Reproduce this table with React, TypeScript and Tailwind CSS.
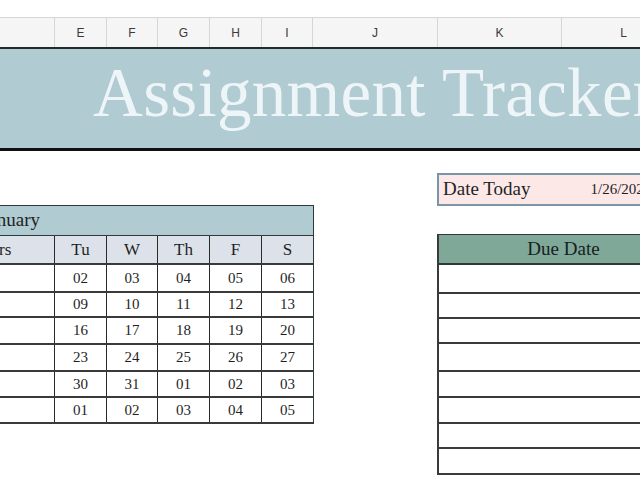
const serif = "font-['Liberation_Serif',serif]";

const letters = [
  { l: "", w: "w-[55px]" },
  { l: "E", w: "w-[52px]" },
  { l: "F", w: "w-[51px]" },
  { l: "G", w: "w-[52px]" },
  { l: "H", w: "w-[52px]" },
  { l: "I", w: "w-[51px]" },
  { l: "J", w: "w-[125px]" },
  { l: "K", w: "w-[124px]" },
  { l: "L", w: "w-[124px]" },
];

const dayCols = ["w-[52px]", "w-[51px]", "w-[52px]", "w-[52px]", "w-[51px]"];
const dayNames = ["Tu", "W", "Th", "F", "S"];

const weeks = [
  { h: "h-[28px]", d: ["02", "03", "04", "05", "06"] },
  { h: "h-[25px]", d: ["09", "10", "11", "12", "13"] },
  { h: "h-[27px]", d: ["16", "17", "18", "19", "20"] },
  { h: "h-[27px]", d: ["23", "24", "25", "26", "27"] },
  { h: "h-[26px]", d: ["30", "31", "01", "02", "03"] },
  { h: "h-[26px]", d: ["01", "02", "03", "04", "05"] },
];

const dueRows = ["h-[29px]", "h-[25px]", "h-[25px]", "h-[28px]", "h-[26px]", "h-[26px]", "h-[25px]", "h-[26px]"];

export default function App() {
  return (
    <div className="h-[479px] w-[640px] overflow-hidden bg-white">
      <div className="h-[17px]" />

      {/* column letters */}
      <div className="flex h-[30px] border-t border-[#d6d6d6] bg-[#f5f5f5] font-['Liberation_Sans',sans-serif] text-[12px] text-[#3a3a3a]">
        {letters.map((c, i) => (
          <div key={i} className={`${c.w} flex shrink-0 items-center justify-center border-r border-[#d6d6d6]`}>
            {c.l}
          </div>
        ))}
      </div>

      {/* banner */}
      <div className={`h-[104px] overflow-hidden border-t-2 border-b-[3px] border-t-[#1f2b2c] border-b-[#111] bg-[#b0cbd1] pl-[93px] pt-[10px] ${serif}`}>
        <div className="whitespace-nowrap text-[69px] leading-none tracking-[0.3px] text-[#eef5f8]">Assignment Tracker</div>
      </div>

      <div className={`flex items-start ${serif} text-[#1f1f1f]`}>
        {/* calendar */}
        <div className="mt-[54px] w-[314px] shrink-0 border-t border-r border-[#2c3a3c]">
          <div className="flex h-[30px] items-center overflow-hidden border-b border-[#2c3a3c] bg-[#b0cbd1] text-[19px]">
            <span className="-ml-[19px]">January</span>
          </div>
          <div className="flex h-[29px] border-b-2 border-[#3a3a3a] bg-[#dde2ea] text-[17px]">
            <div className="flex w-[55px] shrink-0 items-center overflow-hidden border-r border-[#2a2a2a]">
              <span className="-ml-px">rs</span>
            </div>
            {dayNames.map((d, i) => (
              <div key={d} className={`${dayCols[i]} flex shrink-0 items-center justify-center ${i < 4 ? "border-r border-[#2a2a2a]" : ""}`}>
                {d}
              </div>
            ))}
          </div>
          {weeks.map((w, r) => (
            <div key={r} className={`flex ${w.h} border-b-2 border-[#3a3a3a] text-[15px]`}>
              <div className="w-[55px] shrink-0 border-r border-[#2a2a2a]" />
              {w.d.map((d, i) => (
                <div key={i} className={`${dayCols[i]} flex shrink-0 items-center justify-center ${i < 4 ? "border-r border-[#2a2a2a]" : ""}`}>
                  {d}
                </div>
              ))}
            </div>
          ))}
        </div>

        <div className="w-[123px] shrink-0" />

        {/* right side */}
        <div className="w-[260px] shrink-0">
          <div className="mt-[22px] flex h-[33px] items-center border-2 border-[#7b95a8] bg-[#fde8e8]">
            <span className="pl-[4px] text-[19px]">Date Today</span>
            <span className="ml-[60px] text-[15px]">1/26/2022</span>
          </div>

          <div className="mt-[28px] w-[251px] border-l-2 border-[#3a3a3a]">
            <div className="flex h-[31px] items-center justify-center border-t border-b-2 border-t-[#2c3a3c] border-b-[#2f3a36] bg-[#7fa898] text-[19px] text-[#16221e]">
              Due Date
            </div>
            {dueRows.map((h, i) => (
              <div key={i} className={`${h} border-b-2 border-[#3a3a3a]`} />
            ))}
          </div>
        </div>
      </div>
    </div>
  );
}
